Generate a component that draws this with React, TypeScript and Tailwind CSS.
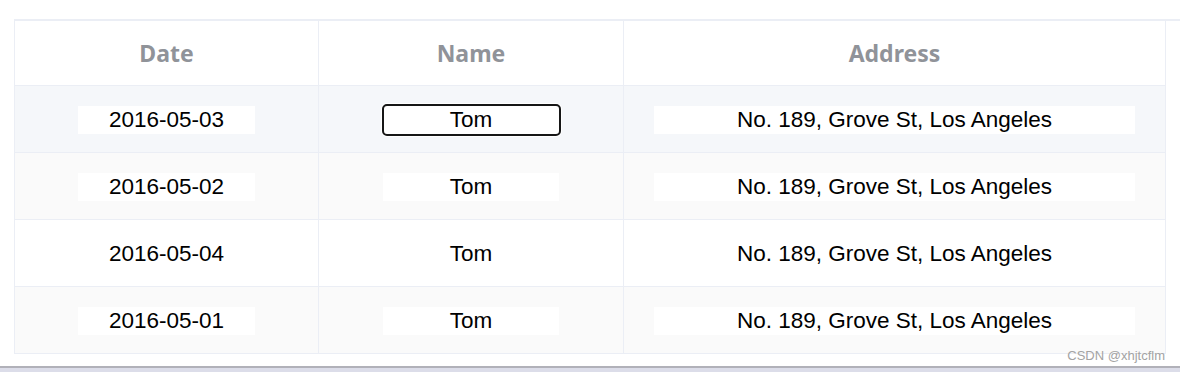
import { useState } from "react";

type Row = { date: string; name: string; address: string };

const rows: Row[] = [
  { date: "2016-05-03", name: "Tom", address: "No. 189, Grove St, Los Angeles" },
  { date: "2016-05-02", name: "Tom", address: "No. 189, Grove St, Los Angeles" },
  { date: "2016-05-04", name: "Tom", address: "No. 189, Grove St, Los Angeles" },
  { date: "2016-05-01", name: "Tom", address: "No. 189, Grove St, Los Angeles" },
];

const rowBg = ["bg-[#f5f7fa]", "bg-[#fafafa]", "bg-white", "bg-[#fafafa]"];

function Cell({ value, width, focused }: { value: string; width: string; focused?: boolean }) {
  const [text, setText] = useState(value);
  return (
    <div className="flex h-[67px] items-center justify-center border-r border-b border-[#ebeef5] pt-[2px]">
      <input
        value={text}
        onChange={(e) => setText(e.target.value)}
        className={
          focused
            ? `${width} h-[32px] rounded-[5px] border-[2.5px] border-[#161616] bg-white text-center text-[22.5px] text-black outline-none ring-1 ring-white`
            : `${width} h-[28px] bg-white text-center text-[22.5px] text-black outline-none`
        }
        style={{ fontFamily: '"Liberation Sans", Arial, sans-serif' }}
      />
    </div>
  );
}

export default function App() {
  return (
    <div className="relative flex h-[372px] w-[1180px] flex-col overflow-hidden bg-white">
      <div className="h-[19px]" />
      <div className="ml-[14px] border-t-2 border-l border-[#ebeef5]">
        <div className="grid grid-cols-[304px_305px_542px]">
          {["Date", "Name", "Address"].map((h) => (
            <div
              key={h}
              className="flex h-[65px] items-center justify-center border-r border-b border-[#ebeef5] text-[23px] font-bold text-[#909399]"
              style={{ fontFamily: '"Noto Sans", "Open Sans", sans-serif' }}
            >
              {h}
            </div>
          ))}
          {rows.map((r, i) => (
            <div key={r.date} className={`col-span-3 grid grid-cols-[304px_305px_542px] ${rowBg[i]}`}>
              <Cell value={r.date} width="w-[177px]" />
              <Cell value={r.name} width={i === 0 ? "w-[179px]" : "w-[176px]"} focused={i === 0} />
              <Cell value={r.address} width="w-[481px]" />
            </div>
          ))}
        </div>
      </div>
      <div className="flex-1" />
      <div className="h-[2px] bg-[#b1b1b9]" />
      <div className="h-[4px] bg-[#dcdde9]" />
      <span
        className="absolute right-[15px] bottom-[10px] text-[13px] leading-none text-[#a3a3a3]"
        style={{ fontFamily: '"Liberation Sans", Arial, sans-serif' }}
      >
        CSDN @xhjtcflm
      </span>
    </div>
  );
}
